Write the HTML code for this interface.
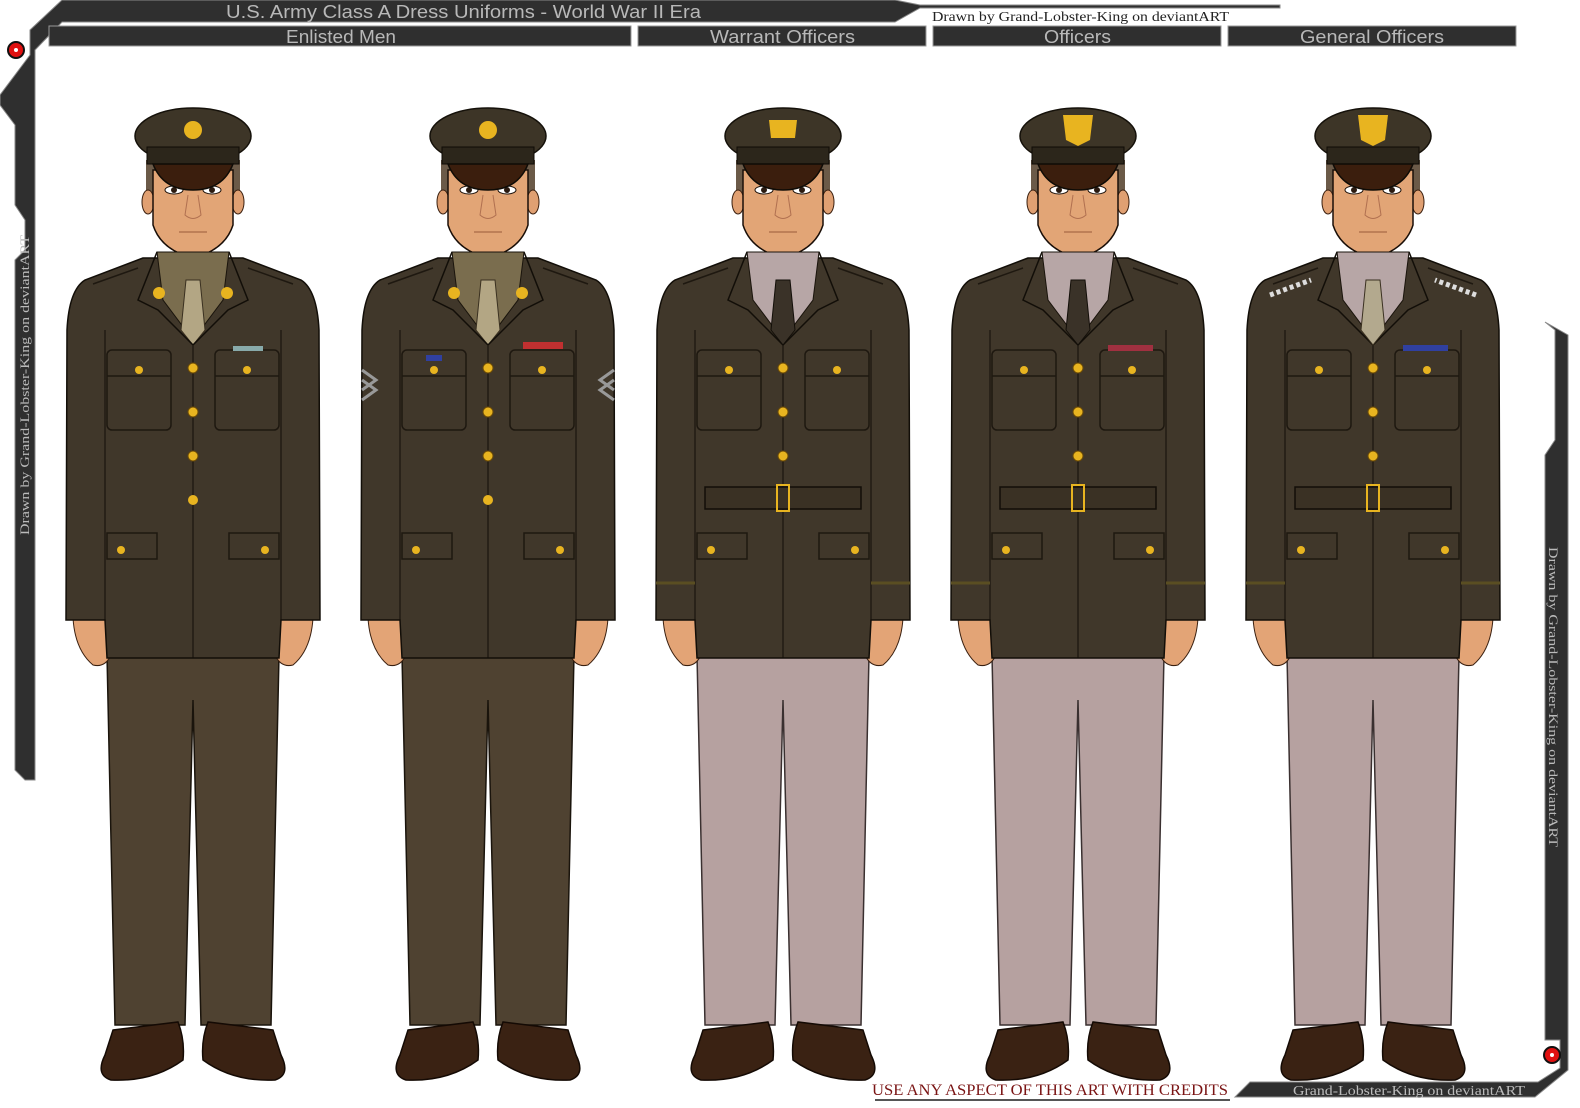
<!DOCTYPE html>
<html><head><meta charset="utf-8"><style>
html,body{margin:0;padding:0;background:#fff;width:1580px;height:1108px;overflow:hidden}
svg{display:block}
</style></head><body>
<svg width="1580" height="1108" viewBox="0 0 1580 1108" xmlns="http://www.w3.org/2000/svg">
<defs>
<g id="base">
  <path d="M-80,1030 L-15,1022 Q-8,1040 -10,1060 Q-40,1082 -82,1080 Q-98,1075 -88,1055 Z" fill="#3a2213" stroke="#140a04" stroke-width="1.5"/>
  <path d="M80,1030 L15,1022 Q8,1040 10,1060 Q40,1082 82,1080 Q98,1075 88,1055 Z" fill="#3a2213" stroke="#140a04" stroke-width="1.5"/>
  <path d="M-120,618 L-88,618 L-82,655 Q-88,668 -100,665 Q-118,650 -120,618Z" fill="#e3a476" stroke="#3a2010" stroke-width="1"/>
  <path d="M120,618 L88,618 L82,655 Q88,668 100,665 Q118,650 120,618Z" fill="#e3a476" stroke="#3a2010" stroke-width="1"/>
</g>
<g id="top">
  <ellipse cx="0" cy="136" rx="58" ry="28" fill="#3d3527" stroke="#15110a" stroke-width="1.5"/>
  <rect x="-47" y="160" width="94" height="50" fill="#6b5a48"/>
  <ellipse cx="-45" cy="202" rx="6" ry="12" fill="#e0a072" stroke="#3a2010"/>
  <ellipse cx="45" cy="202" rx="6" ry="12" fill="#e0a072" stroke="#3a2010"/>
  <path d="M-40,170 L40,170 L40,225 Q32,250 0,258 Q-32,250 -40,225 Z" fill="#e2a576" stroke="#1a0f08" stroke-width="1.5"/>
  <path d="M-5,195 L-8,215 Q0,222 8,215 L5,195" fill="none" stroke="#b07050" stroke-width="1"/>
  <line x1="-14" y1="232" x2="14" y2="232" stroke="#9a5c3a" stroke-width="1"/>
  <ellipse cx="-19" cy="190" rx="9" ry="4" fill="#fff" stroke="#1a0f08"/>
  <ellipse cx="19" cy="190" rx="9" ry="4" fill="#fff" stroke="#1a0f08"/>
  <circle cx="-19" cy="190" r="3" fill="#2a1a10"/><circle cx="19" cy="190" r="3" fill="#2a1a10"/>
  <rect x="-46" y="147" width="92" height="17" fill="#2c261b" stroke="#0e0b06"/>
  <path d="M-40,164 L40,164 Q30,190 0,190 Q-30,190 -40,164 Z" fill="#3b1e0d" stroke="#0e0b06" stroke-width="1.5"/>
  <path d="M-50,258 L-108,280 Q-124,290 -126,330 L-127,620 L-88,620 L-86,658 L86,658 L88,620 L127,620 L126,330 Q124,290 108,280 L50,258 Z" fill="#40372a" stroke="#120e08" stroke-width="1.5"/>
  <line x1="-88" y1="330" x2="-88" y2="620" stroke="#120e08"/>
  <line x1="88" y1="330" x2="88" y2="620" stroke="#120e08"/>
  <line x1="0" y1="345" x2="0" y2="658" stroke="#120e08"/>
  <rect x="-86" y="533" width="50" height="26" fill="none" stroke="#1e1810" stroke-width="1.5"/>
  <rect x="36" y="533" width="50" height="26" fill="none" stroke="#1e1810" stroke-width="1.5"/>
  <circle cx="-72" cy="550" r="4" fill="#e8b420"/><circle cx="72" cy="550" r="4" fill="#e8b420"/>
  <rect x="-86" y="350" width="64" height="80" rx="5" fill="none" stroke="#1e1810" stroke-width="1.5"/>
  <rect x="22" y="350" width="64" height="80" rx="5" fill="none" stroke="#1e1810" stroke-width="1.5"/>
  <path d="M-86,376 L-22,376 M22,376 L86,376" stroke="#1e1810" stroke-width="1.5"/>
  <circle cx="-54" cy="370" r="4" fill="#e8b420"/><circle cx="54" cy="370" r="4" fill="#e8b420"/>
  <circle cx="0" cy="368" r="5" fill="#e8b420" stroke="#6a4a08"/>
  <circle cx="0" cy="412" r="5" fill="#e8b420" stroke="#6a4a08"/>
  <circle cx="0" cy="456" r="5" fill="#e8b420" stroke="#6a4a08"/>
  <path d="M-100,284 L-55,268 M100,284 L55,268" stroke="#1e1810" stroke-width="1.5"/>
</g>
<g id="collarE">
  <path d="M-36,252 L36,252 L30,300 L0,340 L-30,300 Z" fill="#7a6d4e" stroke="#1a140c"/>
  <path d="M-7,280 L7,280 L12,330 L0,345 L-12,330 Z" fill="#b3a684" stroke="#3a3020"/>
  <path d="M-36,252 L-55,300 L-35,310 L0,345 M36,252 L55,300 L35,310 L0,345" fill="none" stroke="#120e08" stroke-width="1.5"/>
  <circle cx="-34" cy="293" r="6" fill="#e8b420"/><circle cx="34" cy="293" r="6" fill="#e8b420"/>
</g>
<g id="offbits">
  <path d="M-86,655 L86,655 L78,1025 L8,1025 L0,700 L-8,1025 L-78,1025 Z" fill="#b6a1a0" stroke="#3a3030" stroke-width="1.5"/>
  <use href="#base"/><use href="#top"/>
  <path d="M-36,252 L36,252 L30,300 L0,340 L-30,300 Z" fill="#b7a6a6" stroke="#1a140c"/>
  <path d="M-36,252 L-55,300 L-35,310 L0,345 M36,252 L55,300 L35,310 L0,345" fill="none" stroke="#120e08" stroke-width="1.5"/>
  <rect x="-78" y="487" width="156" height="22" fill="#3a3124" stroke="#120e08" stroke-width="1.5"/>
  <rect x="-6" y="485" width="12" height="26" fill="none" stroke="#e8b420" stroke-width="2"/>
  <line x1="-127" y1="583" x2="-88" y2="583" stroke="#5a4e22" stroke-width="3"/>
  <line x1="88" y1="583" x2="127" y2="583" stroke="#5a4e22" stroke-width="3"/>
</g>
</defs>

<!-- frame -->
<path d="M0,105 L0,95 L30,55 L30,30 L62,0 L895,0 L920,5 L1280,5 L1280,8 L920,8 L895,22 L62,22 L35,50 L35,780 L25,780 L15,770 L15,260 L25,250 L25,220 L15,205 L15,125 L0,105Z" fill="#2f2f2f" stroke="#888" stroke-width="1"/>
<text x="226" y="18" textLength="475" lengthAdjust="spacingAndGlyphs" font-family="'Liberation Sans',sans-serif" font-size="18" fill="#b8b8b8">U.S. Army Class A Dress Uniforms - World War II Era</text>
<text x="932" y="21" textLength="297" lengthAdjust="spacingAndGlyphs" font-family="'Liberation Serif',serif" font-size="14" fill="#222">Drawn by Grand-Lobster-King on deviantART</text>
<circle cx="16" cy="50" r="8" fill="#e01010" stroke="#111" stroke-width="2"/><circle cx="16" cy="50" r="2" fill="#fff"/>

<g font-family="'Liberation Sans',sans-serif" font-size="18" fill="#b8b8b8">
<rect x="49" y="26" width="582" height="20" fill="#2f2f2f" stroke="#999"/><text x="286" y="43" textLength="110" lengthAdjust="spacingAndGlyphs">Enlisted Men</text>
<rect x="638" y="26" width="288" height="20" fill="#2f2f2f" stroke="#999"/><text x="710" y="43" textLength="145" lengthAdjust="spacingAndGlyphs">Warrant Officers</text>
<rect x="933" y="26" width="288" height="20" fill="#2f2f2f" stroke="#999"/><text x="1044" y="43" textLength="67" lengthAdjust="spacingAndGlyphs">Officers</text>
<rect x="1228" y="26" width="288" height="20" fill="#2f2f2f" stroke="#999"/><text x="1300" y="43" textLength="144" lengthAdjust="spacingAndGlyphs">General Officers</text>
</g>
<text transform="translate(29,535) rotate(-90)" textLength="300" lengthAdjust="spacingAndGlyphs" font-family="'Liberation Serif',serif" font-size="13" fill="#bbb">Drawn by Grand-Lobster-King on deviantART</text>

<path d="M1545,322 L1555,330 L1555,440 L1545,455 L1545,1040 L1560,1040 L1560,1068 L1538,1082 L1250,1082 L1235,1097 L1535,1097 L1568,1070 L1568,335 Z" fill="#2f2f2f" stroke="#888"/>
<text transform="translate(1549,547) rotate(90)" textLength="300" lengthAdjust="spacingAndGlyphs" font-family="'Liberation Serif',serif" font-size="13" fill="#bbb">Drawn by Grand-Lobster-King on deviantART</text>
<circle cx="1552" cy="1055" r="8" fill="#e01010" stroke="#111" stroke-width="2"/><circle cx="1552" cy="1055" r="2" fill="#fff"/>
<text x="1293" y="1095" textLength="232" lengthAdjust="spacingAndGlyphs" font-family="'Liberation Serif',serif" font-size="14" fill="#bbb">Grand-Lobster-King on deviantART</text>
<text x="872" y="1095" textLength="356" lengthAdjust="spacingAndGlyphs" font-family="'Liberation Serif',serif" font-size="16" fill="#7a1414">USE ANY ASPECT OF THIS ART WITH CREDITS</text>
<line x1="875" y1="1100" x2="1230" y2="1100" stroke="#555" stroke-width="2"/>

<!-- figures -->
<g transform="translate(193,0)">
  <path d="M-86,655 L86,655 L78,1025 L8,1025 L0,700 L-8,1025 L-78,1025 Z" fill="#4f4231" stroke="#1a140c" stroke-width="1.5"/>
  <use href="#base"/><use href="#top"/><use href="#collarE"/>
  <circle cx="0" cy="500" r="5" fill="#e8b420"/>
  <circle cx="0" cy="130" r="9" fill="#e8b420"/>
  <rect x="40" y="346" width="30" height="5" fill="#8aa"/>
</g>
<g transform="translate(488,0)">
  <path d="M-86,655 L86,655 L78,1025 L8,1025 L0,700 L-8,1025 L-78,1025 Z" fill="#4f4231" stroke="#1a140c" stroke-width="1.5"/>
  <use href="#base"/><use href="#top"/><use href="#collarE"/>
  <circle cx="0" cy="500" r="5" fill="#e8b420"/>
  <circle cx="0" cy="130" r="9" fill="#e8b420"/>
  <rect x="35" y="342" width="40" height="7" fill="#c03030"/>
  <rect x="-62" y="355" width="16" height="6" fill="#3040a0"/>
  <path d="M-126,370 L-112,380 L-126,390 M-126,380 L-112,390 L-126,400" stroke="#999" stroke-width="3" fill="none"/>
  <path d="M126,370 L112,380 L126,390 M126,380 L112,390 L126,400" stroke="#999" stroke-width="3" fill="none"/>
</g>
<g transform="translate(783,0)">
  <use href="#offbits"/>
  <path d="M-7,280 L7,280 L12,330 L0,345 L-12,330 Z" fill="#3a3228" stroke="#120e08"/>
  <path d="M-14,120 L14,120 L12,138 L-12,138 Z" fill="#e8b420"/>
</g>
<g transform="translate(1078,0)">
  <use href="#offbits"/>
  <path d="M-7,280 L7,280 L12,330 L0,345 L-12,330 Z" fill="#3a3228" stroke="#120e08"/>
  <path d="M-15,115 L15,115 L12,140 L0,146 L-12,140 Z" fill="#e8b420"/>
  <rect x="30" y="345" width="45" height="6" fill="#a03040"/>
</g>
<g transform="translate(1373,0)">
  <use href="#offbits"/>
  <path d="M-7,280 L7,280 L12,330 L0,345 L-12,330 Z" fill="#b3a98e" stroke="#3a3020"/>
  <path d="M-15,115 L15,115 L12,140 L0,146 L-12,140 Z" fill="#e8b420"/>
  <path d="M-103,295 L-62,280 M103,295 L62,280" stroke="#ddd" stroke-width="5" stroke-dasharray="4 3"/>
  <rect x="30" y="345" width="45" height="6" fill="#3040a0"/>
</g>
</svg>
</body></html>
